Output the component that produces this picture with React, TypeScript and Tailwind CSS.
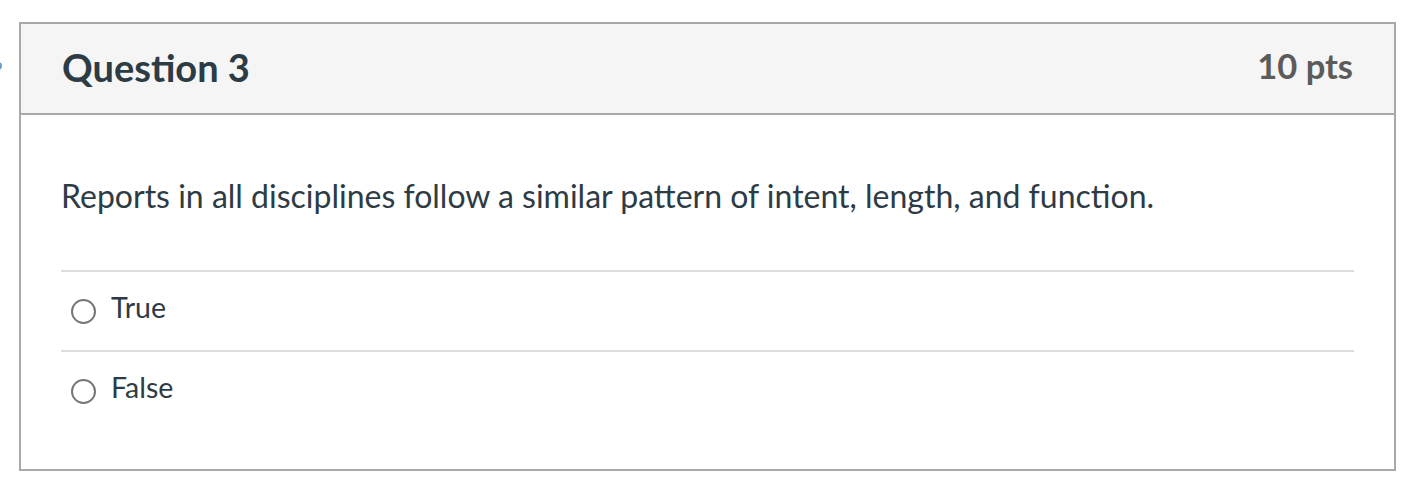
export default function App() {
    return (
        <div className="relative min-h-[484px] w-[1416px] bg-white pl-[19px] pr-[20px] pt-[22px] font-['Lato',sans-serif]">
            {/* cut-off marker on the left edge */}
            <div className="absolute left-[-6px] top-[62px] h-[8px] w-[8px] rounded-full bg-[#6a9bc3]" />

            <div className="w-[1377px] border-2 border-[#a9a9a9]">
                {/* Header */}
                <div className="flex h-[91px] items-center justify-between border-b-2 border-[#a9a9a9] bg-[#f5f5f5] px-[41px]">
                    <h2 className="mb-[4px] text-[38px] font-bold leading-none text-[#2d3b45]">Question 3</h2>
                    <span className="mb-[4px] text-[34.5px] font-bold leading-none text-[#5b5b5b]">10 pts</span>
                </div>

                {/* Body */}
                <div className="px-[40px] pb-[39px] pt-[58px]">
                    <p className="mb-[52px] text-[32px] leading-[45px] text-[#2d3b45]">
                        Reports in all disciplines follow a similar pattern of intent, length, and function.
                    </p>

                    {['True', 'False'].map((label) => (
                        <label key={label} className="flex h-[80px] items-center border-t-2 border-[#dddddd] pl-[10px]">
                            <span className="h-[25px] w-[25px] shrink-0 rounded-full border-2 border-[#767676] bg-white" />
                            <span className="mb-[8px] ml-[15px] text-[28.5px] leading-none text-[#2d3b45]">{label}</span>
                        </label>
                    ))}
                </div>
            </div>
        </div>
    );
}
